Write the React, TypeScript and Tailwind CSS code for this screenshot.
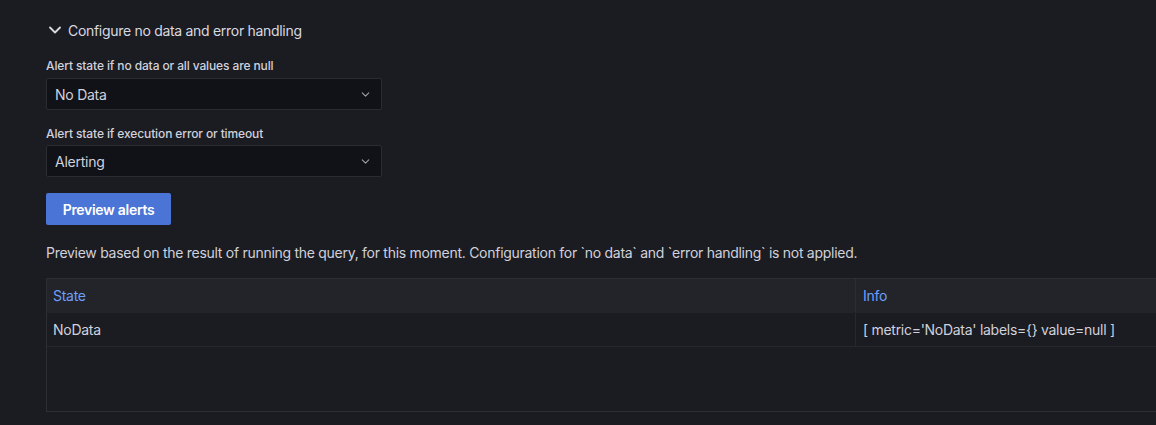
import { ChevronDown } from 'lucide-react';

type PreviewRow = {
  state: string;
  info: string;
};

const rows: PreviewRow[] = [{ state: 'NoData', info: "[ metric='NoData' labels={} value=null ]" }];

function SelectBox({ value }: { value: string }) {
  return (
    <div className="flex h-[32px] w-[336px] items-center justify-between rounded-[2px] border border-[#2a2c33] bg-[#111217] pl-[8px] pr-[9px] text-[14px] tracking-[-0.25px] text-[#d0d1dc]">
      <span>{value}</span>
      <ChevronDown size={13} strokeWidth={2} className="text-[#9fa1a9]" />
    </div>
  );
}

export default function App() {
  return (
    <div className="h-[425px] w-full overflow-hidden bg-[#1b1c21] font-['Inter',sans-serif] text-[#ccccdc]">
      <div className="pl-[46px] pt-[20px]">
        <div className="ml-[-1px] flex h-[20px] items-center gap-[3px] text-[14px] tracking-[-0.3px] text-[#d8d9e0]">
          <ChevronDown size={20} strokeWidth={2.2} />
          <span>Configure no data and error handling</span>
        </div>

        <div className="mt-[19px]">
          <label className="block text-[12px] font-medium leading-[14px] tracking-[-0.12px] text-[#d0d1dc]">Alert state if no data or all values are null</label>
          <div className="mt-[5px]">
            <SelectBox value="No Data" />
          </div>
        </div>

        <div className="mt-[17px]">
          <label className="block text-[12px] font-medium leading-[14px] tracking-[-0.12px] text-[#d0d1dc]">Alert state if execution error or timeout</label>
          <div className="mt-[4px]">
            <SelectBox value="Alerting" />
          </div>
        </div>

        <button className="mt-[16px] h-[32px] w-[125px] rounded-[2px] bg-[#4a74d5] text-[14px] font-semibold tracking-[-0.3px] text-white">Preview alerts</button>

        <p className="mt-[19px] text-[14px] leading-[18px] tracking-[-0.28px] text-[#d0d1dc]">
          Preview based on the result of running the query, for this moment. Configuration for `no data` and `error handling` is not applied.
        </p>

        <div className="mt-[16px] h-[134px] w-[1200px] border border-[#2c2e35] bg-[#1b1c21] tracking-[-0.28px]">
          <div className="flex h-[34px] bg-[#222429] pb-[1px] text-[14px] text-[#6e9fff]">
            <div className="flex w-[808px] items-center pl-[6px]">State</div>
            <div className="flex items-center border-l border-[#2c2e35] pl-[7px]">Info</div>
          </div>
          {rows.map((row) => (
            <div key={row.state} className="flex h-[34px] border-b border-[#26282e] text-[14px] text-[#d0d1dc]">
              <div className="flex w-[808px] items-center pl-[6px]">{row.state}</div>
              <div className="flex items-center border-l border-[#26282e] pl-[7px]">{row.info}</div>
            </div>
          ))}
        </div>
      </div>
    </div>
  );
}
